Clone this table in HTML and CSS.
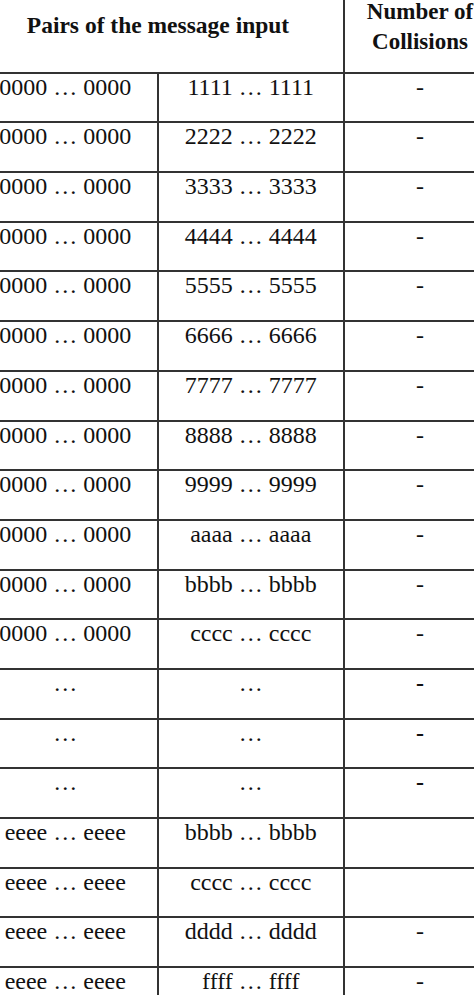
FILE: index.html
```html
<!DOCTYPE html>
<html lang="en">
<head>
<meta charset="utf-8">
<title>Pairs of the message input</title>
<link rel="stylesheet" href="styles.css">
</head>
<body>
<div class="table" role="table">
  <div class="cell head pairs" role="columnheader">Pairs of the message input</div>
  <div class="cell head count" role="columnheader">Number of<br>Collisions</div>

  <div class="cell">0000 … 0000</div><div class="cell">1111 … 1111</div><div class="cell">-</div>
  <div class="cell">0000 … 0000</div><div class="cell">2222 … 2222</div><div class="cell">-</div>
  <div class="cell">0000 … 0000</div><div class="cell">3333 … 3333</div><div class="cell">-</div>
  <div class="cell">0000 … 0000</div><div class="cell">4444 … 4444</div><div class="cell">-</div>
  <div class="cell">0000 … 0000</div><div class="cell">5555 … 5555</div><div class="cell">-</div>
  <div class="cell">0000 … 0000</div><div class="cell">6666 … 6666</div><div class="cell">-</div>
  <div class="cell">0000 … 0000</div><div class="cell">7777 … 7777</div><div class="cell">-</div>
  <div class="cell">0000 … 0000</div><div class="cell">8888 … 8888</div><div class="cell">-</div>
  <div class="cell">0000 … 0000</div><div class="cell">9999 … 9999</div><div class="cell">-</div>
  <div class="cell">0000 … 0000</div><div class="cell">aaaa … aaaa</div><div class="cell">-</div>
  <div class="cell">0000 … 0000</div><div class="cell">bbbb … bbbb</div><div class="cell">-</div>
  <div class="cell">0000 … 0000</div><div class="cell">cccc … cccc</div><div class="cell">-</div>
  <div class="cell">…</div><div class="cell">…</div><div class="cell strong">-</div>
  <div class="cell">…</div><div class="cell">…</div><div class="cell strong">-</div>
  <div class="cell">…</div><div class="cell">…</div><div class="cell strong">-</div>
  <div class="cell">eeee … eeee</div><div class="cell">bbbb … bbbb</div><div class="cell"></div>
  <div class="cell">eeee … eeee</div><div class="cell">cccc … cccc</div><div class="cell"></div>
  <div class="cell">eeee … eeee</div><div class="cell">dddd … dddd</div><div class="cell">-</div>
  <div class="cell">eeee … eeee</div><div class="cell">ffff … ffff</div><div class="cell">-</div>
</div>
</body>
</html>
```

FILE: styles.css
```css
html, body {
  margin: 0;
  padding: 0;
  overflow: hidden;
  background: #ffffff;
}

body {
  font-family: "Liberation Serif", "Times New Roman", serif;
  font-size: 24px;
  color: #111111;
}

.table {
  display: grid;
  grid-template-columns: 183.5px 183.5px 151px;
  grid-template-rows: 71.7px;
  grid-auto-rows: 47.7px;
  gap: 2px;
  background: #333333;
  margin-left: -26.5px;
  width: max-content;
}

.cell {
  background: #ffffff;
  text-align: center;
  white-space: nowrap;
  padding-top: 0;
}

.head {
  font-weight: bold;
  font-size: 23.5px;
}

.pairs {
  grid-column: 1 / 3;
  padding-top: 12px;
}

.count {
  font-size: 23px;
  line-height: 30px;
  margin-top: -3px;
}

.strong {
  font-weight: bold;
}
```
